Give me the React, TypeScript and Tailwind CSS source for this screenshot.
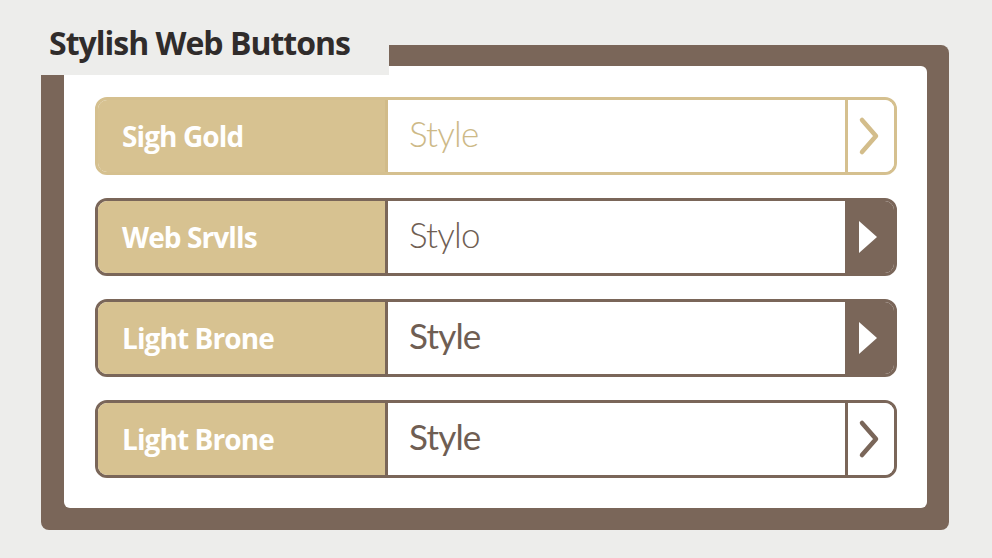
import React from 'react'

type Variant = 'gold' | 'solid' | 'outline'

interface RowProps {
  label: string
  text: string
  variant: Variant
  light?: boolean
}

function Chevron({ color }: { color: string }) {
  return (
    <svg width="22" height="40" viewBox="0 0 22 40" fill="none">
      <path d="M4 4 L18 20 L4 36" stroke={color} strokeWidth="4.5" strokeLinecap="round" strokeLinejoin="round" />
    </svg>
  )
}

function Triangle() {
  return (
    <svg width="22" height="36" viewBox="0 0 22 36">
      <path d="M2 2 L20 18 L2 34 Z" fill="#ffffff" />
    </svg>
  )
}

function ButtonRow({ label, text, variant, light }: RowProps) {
  const gold = variant === 'gold'
  return (
    <div
      className={`flex h-[78px] rounded-[12px] border-[3px] overflow-hidden ${
        gold ? 'border-[#d5c08f]' : 'border-[#7a6659]'
      }`}
    >
      <div
        className={`w-[290px] shrink-0 bg-[#d7c291] flex items-center pl-[24px] border-r-[3px] ${
          gold ? 'border-[#d1bb89]' : 'border-[#7a6659]'
        }`}
      >
        <span className="text-white font-['Open_Sans',sans-serif] font-bold text-[28px] tracking-[-0.9px]">
          {label}
        </span>
      </div>
      <div className="flex-1 bg-white flex items-center pl-[21px] pb-[6px]">
        <span
          className={`font-['Lato',sans-serif] text-[35px] tracking-[-0.8px] ${
            gold ? 'text-[#cdb987] font-light' : light ? 'text-[#6f5e53] font-light' : 'text-[#6f5e53] font-normal'
          }`}
        >
          {text}
        </span>
      </div>
      {variant === 'solid' ? (
        <div className="w-[49px] shrink-0 bg-[#7a6659] flex items-center justify-center pr-[4px]">
          <Triangle />
        </div>
      ) : (
        <div
          className={`w-[49px] shrink-0 bg-white flex items-center justify-center border-l-[3px] pr-[4px] ${
            gold ? 'border-[#d5c08f]' : 'border-[#7a6659]'
          }`}
        >
          <Chevron color={gold ? '#d3bd8b' : '#7a6659'} />
        </div>
      )}
    </div>
  )
}

export default function App() {
  return (
    <div className="w-[992px] h-[558px] bg-[#ededeb] relative overflow-hidden">
      <div className="pt-[45px] pl-[41px]">
        <div className="w-[908px] h-[485px] bg-[#7a6659] rounded-[8px] pt-[21px] pl-[23px] pr-[22px] pb-[22px]">
          <div className="w-full h-full bg-white rounded-[6px] pt-[31px] pl-[31px] pr-[30px] flex flex-col gap-[23px]">
            <ButtonRow label="Sigh Gold" text="Style" variant="gold" light />
            <ButtonRow label="Web Srvlls" text="Stylo" variant="solid" light />
            <ButtonRow label="Light Brone" text="Style" variant="solid" />
            <ButtonRow label="Light Brone" text="Style" variant="outline" />
          </div>
        </div>
      </div>

      {/* title tab overlapping the frame */}
      <div className="absolute left-[38px] top-0 w-[351px] h-[75px] bg-[#ededeb] flex items-end pb-[16px] pl-[11px]">
        <h1 className="font-['Open_Sans',sans-serif] font-bold text-[32px] leading-none tracking-[-1px] text-[#302c2b]">
          Stylish Web Buttons
        </h1>
      </div>
    </div>
  )
}
